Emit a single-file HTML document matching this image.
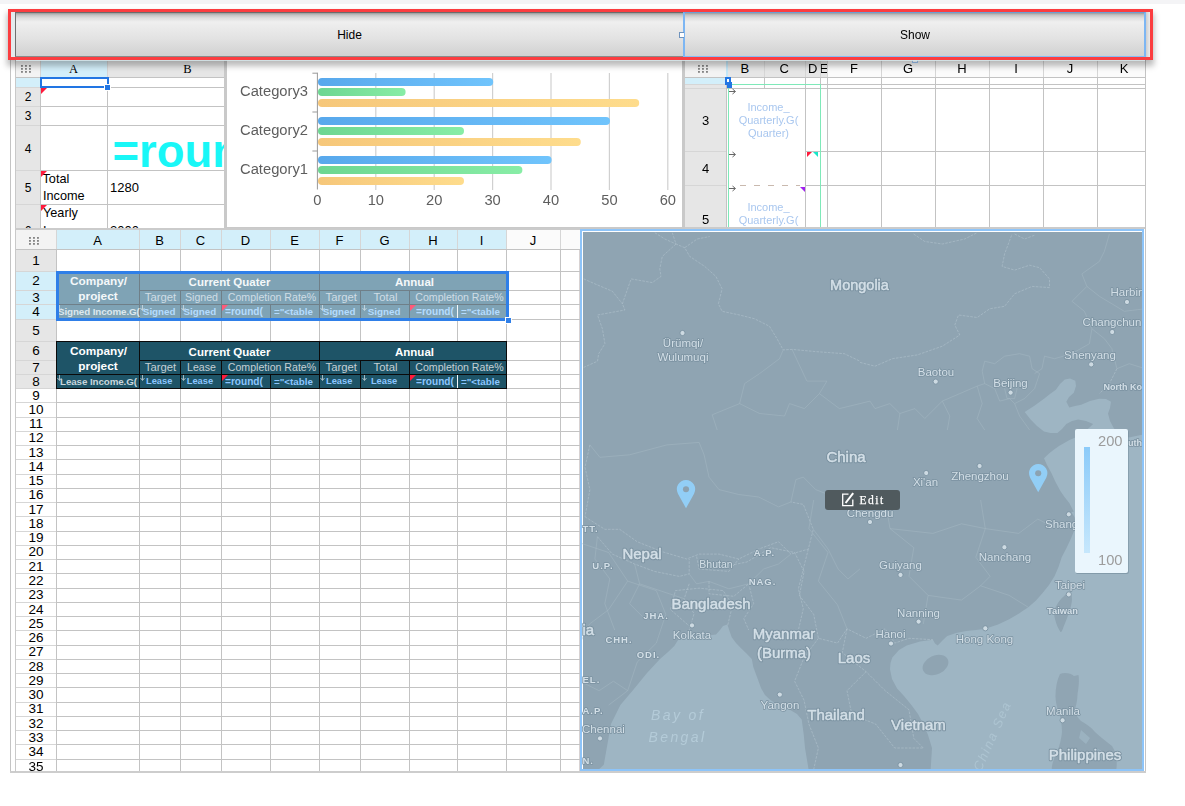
<!DOCTYPE html>
<html><head><meta charset="utf-8"><title>Report</title>
<style>
html,body{margin:0;padding:0;}
body{width:1185px;height:806px;position:relative;overflow:hidden;background:#fff;font-family:"Liberation Sans",sans-serif;}
#root div,#root svg{position:absolute;box-sizing:border-box;}
#root{position:absolute;left:0;top:0;width:1185px;height:806px;overflow:hidden;}
.t{white-space:nowrap;text-align:center;font-size:13px;color:#000;overflow:hidden;}
.clip{overflow:hidden;}
</style></head><body><div id="root">
<div style="left:0px;top:0px;width:1185px;height:4px;background:#f4f4f6"></div>
<div style="left:10px;top:10px;width:1px;height:762px;background:#c4c4c4"></div>
<div style="left:1145px;top:10px;width:1px;height:762px;background:#c4c4c4"></div>
<div style="left:10px;top:771px;width:1136px;height:2px;background:#cdcdcd"></div>
<div style="left:15px;top:60px;width:212px;height:169px;background:#fff"></div>
<div style="left:16px;top:60px;width:24px;height:17px;background:#f3f3f3"></div>
<div style="left:40px;top:60px;width:67px;height:17px;background:#d3effa"></div>
<div style="left:107px;top:60px;width:117px;height:17px;background:#e6e6e6"></div>
<div style="left:16px;top:77px;width:24px;height:10px;background:#d3effa"></div>
<div style="left:16px;top:87px;width:24px;height:141px;background:#e6e6e6"></div>
<svg style="left:21px;top:65px" width="11" height="9" viewBox="0 0 11 9"><rect x="0" y="0" width="1.9" height="1.8" fill="#858585"/><rect x="0" y="3" width="1.9" height="1.8" fill="#858585"/><rect x="0" y="6" width="1.9" height="1.8" fill="#858585"/><rect x="4" y="0" width="1.9" height="1.8" fill="#858585"/><rect x="4" y="3" width="1.9" height="1.8" fill="#858585"/><rect x="4" y="6" width="1.9" height="1.8" fill="#858585"/><rect x="8" y="0" width="1.9" height="1.8" fill="#858585"/><rect x="8" y="3" width="1.9" height="1.8" fill="#858585"/><rect x="8" y="6" width="1.9" height="1.8" fill="#858585"/></svg>
<div class="t" style="left:40px;top:61px;width:67px;height:17px;line-height:17px;font-family:'Liberation Serif',serif;font-size:12.5px">A</div>
<div class="t" style="left:147px;top:61px;width:81px;height:17px;line-height:17px;font-family:'Liberation Serif',serif;font-size:12.5px">B</div>
<div style="left:16px;top:77px;width:208px;height:1px;background:#c3c3c3"></div>
<div style="left:16px;top:87px;width:208px;height:1px;background:#c3c3c3"></div>
<div style="left:16px;top:87px;width:24px;height:1px;background:#d6d6d6"></div>
<div style="left:16px;top:106px;width:208px;height:1px;background:#c3c3c3"></div>
<div style="left:16px;top:106px;width:24px;height:1px;background:#d6d6d6"></div>
<div style="left:16px;top:125px;width:208px;height:1px;background:#c3c3c3"></div>
<div style="left:16px;top:125px;width:24px;height:1px;background:#d6d6d6"></div>
<div style="left:16px;top:170px;width:208px;height:1px;background:#c3c3c3"></div>
<div style="left:16px;top:170px;width:24px;height:1px;background:#d6d6d6"></div>
<div style="left:16px;top:204px;width:208px;height:1px;background:#c3c3c3"></div>
<div style="left:16px;top:204px;width:24px;height:1px;background:#d6d6d6"></div>
<div style="left:40px;top:60px;width:1px;height:168px;background:#c3c3c3"></div>
<div style="left:40px;top:60px;width:1px;height:17px;background:#d6d6d6"></div>
<div style="left:107px;top:60px;width:1px;height:168px;background:#c3c3c3"></div>
<div style="left:107px;top:60px;width:1px;height:17px;background:#d6d6d6"></div>
<div style="left:15px;top:60px;width:1px;height:169px;background:#c9c9c9"></div>
<div class="t" style="left:16px;top:87.5px;width:24px;height:19.5px;line-height:19.5px;font-size:12px">2</div>
<div class="t" style="left:16px;top:106.5px;width:24px;height:19.5px;line-height:19.5px;font-size:12px">3</div>
<div class="t" style="left:16px;top:126.5px;width:24px;height:44.5px;line-height:44.5px;font-size:12px">4</div>
<div class="t" style="left:16px;top:172px;width:24px;height:33px;line-height:33px;font-size:12px">5</div>
<div class="clip" style="left:16px;top:205px;width:24px;height:23px"><div class="t" style="left:0;top:19px;width:24px;height:14px;line-height:14px;font-size:12px">6</div></div>
<div class="clip" style="left:108px;top:126px;width:116px;height:44px"><div class="t" style="left:4.5px;top:3.5px;height:44px;line-height:44px;font-size:45.5px;font-weight:bold;color:#19f7f7;text-align:left;width:300px;overflow:visible">=round(</div></div>
<div class="t" style="left:42.5px;top:171px;width:62px;height:17px;line-height:17px;font-size:12.7px;text-align:left">Total</div>
<div class="t" style="left:43px;top:188px;width:62px;height:17px;line-height:17px;font-size:12.7px;text-align:left">Income</div>
<div class="t" style="left:110px;top:179px;width:60px;height:17px;line-height:17px;font-size:13px;text-align:left">1280</div>
<div class="t" style="left:43px;top:205px;width:62px;height:17px;line-height:17px;font-size:12.7px;text-align:left">Yearly</div>
<div class="clip" style="left:41px;top:218px;width:180px;height:10px"><div class="t" style="left:2px;top:5px;width:60px;height:17px;line-height:17px;font-size:12.7px;text-align:left">Income</div><div class="t" style="left:69px;top:4px;width:60px;height:17px;line-height:17px;font-size:13px;text-align:left">2000</div></div>
<svg style="left:41px;top:88px" width="6" height="6"><polygon points="0,0 6,0 0,6" fill="#ff1a3c"/></svg>
<svg style="left:41px;top:171px" width="6" height="6"><polygon points="0,0 6,0 0,6" fill="#ff1a3c"/></svg>
<svg style="left:41px;top:205px" width="6" height="6"><polygon points="0,0 6,0 0,6" fill="#ff1a3c"/></svg>
<div style="left:40px;top:77px;width:69px;height:11px;border:2px solid #2276e3;background:#fff"></div>
<div style="left:104px;top:84px;width:7px;height:7px;background:#2276e3;border:1px solid #fff"></div>
<div style="left:224px;top:60px;width:461px;height:169px;background:#fff;border:3px solid #c9c9c9;border-top:none;border-bottom-width:2px"></div>
<svg style="left:0;top:0;will-change:transform" width="1185" height="240" font-family="Liberation Sans, sans-serif"><line x1="375.8" y1="73" x2="375.8" y2="190" stroke="#d0d0d0" stroke-width="1.2"/><line x1="434.2" y1="73" x2="434.2" y2="190" stroke="#d0d0d0" stroke-width="1.2"/><line x1="492.6" y1="73" x2="492.6" y2="190" stroke="#d0d0d0" stroke-width="1.2"/><line x1="551.0" y1="73" x2="551.0" y2="190" stroke="#d0d0d0" stroke-width="1.2"/><line x1="609.4" y1="73" x2="609.4" y2="190" stroke="#d0d0d0" stroke-width="1.2"/><line x1="667.8" y1="73" x2="667.8" y2="190" stroke="#d0d0d0" stroke-width="1.2"/><line x1="317.4" y1="72.7" x2="317.4" y2="189.5" stroke="#999" stroke-width="1"/><line x1="312.4" y1="73.2" x2="317.4" y2="73.2" stroke="#999" stroke-width="1"/><line x1="312.4" y1="112" x2="317.4" y2="112" stroke="#999" stroke-width="1"/><line x1="312.4" y1="151" x2="317.4" y2="151" stroke="#999" stroke-width="1"/><defs>
<linearGradient id="gb" x1="0" x2="1" y1="0" y2="0"><stop offset="0" stop-color="#58a8ec"/><stop offset="1" stop-color="#70c4fc"/></linearGradient>
<linearGradient id="gg" x1="0" x2="1" y1="0" y2="0"><stop offset="0" stop-color="#6dd691"/><stop offset="1" stop-color="#88eda6"/></linearGradient>
<linearGradient id="go" x1="0" x2="1" y1="0" y2="0"><stop offset="0" stop-color="#f6c77a"/><stop offset="1" stop-color="#fedc8c"/></linearGradient>
</defs><rect x="318.0" y="78" width="175.2" height="8" rx="4" fill="url(#gb)"/><rect x="318.0" y="88" width="87.6" height="8" rx="4" fill="url(#gg)"/><rect x="318.0" y="99" width="321.2" height="8" rx="4" fill="url(#go)"/><rect x="318.0" y="117" width="292.0" height="8" rx="4" fill="url(#gb)"/><rect x="318.0" y="127" width="146.0" height="8" rx="4" fill="url(#gg)"/><rect x="318.0" y="138" width="262.8" height="8" rx="4" fill="url(#go)"/><rect x="318.0" y="156" width="233.6" height="8" rx="4" fill="url(#gb)"/><rect x="318.0" y="166" width="204.4" height="8" rx="4" fill="url(#gg)"/><rect x="318.0" y="177" width="146.0" height="8" rx="4" fill="url(#go)"/><text x="308" y="96.3" text-anchor="end" font-size="15.3" textLength="68" lengthAdjust="spacingAndGlyphs" fill="#5e5e5e">Category3</text><text x="308" y="135.3" text-anchor="end" font-size="15.3" textLength="68" lengthAdjust="spacingAndGlyphs" fill="#5e5e5e">Category2</text><text x="308" y="174.3" text-anchor="end" font-size="15.3" textLength="68" lengthAdjust="spacingAndGlyphs" fill="#5e5e5e">Category1</text><text x="317.4" y="205.3" text-anchor="middle" font-size="14.7" fill="#5e5e5e">0</text><text x="375.8" y="205.3" text-anchor="middle" font-size="14.7" fill="#5e5e5e">10</text><text x="434.2" y="205.3" text-anchor="middle" font-size="14.7" fill="#5e5e5e">20</text><text x="492.6" y="205.3" text-anchor="middle" font-size="14.7" fill="#5e5e5e">30</text><text x="551.0" y="205.3" text-anchor="middle" font-size="14.7" fill="#5e5e5e">40</text><text x="609.4" y="205.3" text-anchor="middle" font-size="14.7" fill="#5e5e5e">50</text><text x="667.8" y="205.3" text-anchor="middle" font-size="14.7" fill="#5e5e5e">60</text></svg>
<div style="left:685px;top:60px;width:460px;height:168px;background:#fff"></div>
<div style="left:685px;top:60px;width:41px;height:17px;background:#f3f3f3"></div>
<div style="left:726px;top:60px;width:101px;height:17px;background:#e6e6e6"></div>
<div style="left:827px;top:60px;width:318px;height:17px;background:#fbfbfb"></div>
<div style="left:685px;top:77px;width:41px;height:7px;background:#d3effa"></div>
<div style="left:685px;top:84px;width:41px;height:144px;background:#e6e6e6"></div>
<svg style="left:698px;top:65px" width="11" height="9" viewBox="0 0 11 9"><rect x="0" y="0" width="1.9" height="1.8" fill="#858585"/><rect x="0" y="3" width="1.9" height="1.8" fill="#858585"/><rect x="0" y="6" width="1.9" height="1.8" fill="#858585"/><rect x="4" y="0" width="1.9" height="1.8" fill="#858585"/><rect x="4" y="3" width="1.9" height="1.8" fill="#858585"/><rect x="4" y="6" width="1.9" height="1.8" fill="#858585"/><rect x="8" y="0" width="1.9" height="1.8" fill="#858585"/><rect x="8" y="3" width="1.9" height="1.8" fill="#858585"/><rect x="8" y="6" width="1.9" height="1.8" fill="#858585"/></svg>
<div class="t" style="left:720px;top:60px;width:49.5px;height:17px;line-height:17px;font-size:13px;overflow:visible">B</div>
<div class="t" style="left:757.5px;top:60px;width:53.5px;height:17px;line-height:17px;font-size:13px;overflow:visible">C</div>
<div class="t" style="left:799px;top:60px;width:27.5px;height:17px;line-height:17px;font-size:13px;overflow:visible">D</div>
<div class="t" style="left:814.5px;top:60px;width:18.5px;height:17px;line-height:17px;font-size:13px;overflow:visible">E</div>
<div class="t" style="left:821px;top:60px;width:66px;height:17px;line-height:17px;font-size:13px;overflow:visible">F</div>
<div class="t" style="left:875px;top:60px;width:66px;height:17px;line-height:17px;font-size:13px;overflow:visible">G</div>
<div class="t" style="left:929px;top:60px;width:66px;height:17px;line-height:17px;font-size:13px;overflow:visible">H</div>
<div class="t" style="left:983px;top:60px;width:66px;height:17px;line-height:17px;font-size:13px;overflow:visible">I</div>
<div class="t" style="left:1037px;top:60px;width:66px;height:17px;line-height:17px;font-size:13px;overflow:visible">J</div>
<div class="t" style="left:1091px;top:60px;width:66px;height:17px;line-height:17px;font-size:13px;overflow:visible">K</div>
<div style="left:685px;top:77px;width:460px;height:1px;background:#c3c3c3"></div>
<div style="left:685px;top:84px;width:460px;height:1px;background:#c3c3c3"></div>
<div style="left:685px;top:84px;width:41px;height:1px;background:#d6d6d6"></div>
<div style="left:685px;top:88px;width:460px;height:1px;background:#c3c3c3"></div>
<div style="left:685px;top:88px;width:41px;height:1px;background:#d6d6d6"></div>
<div style="left:685px;top:151px;width:460px;height:1px;background:#c3c3c3"></div>
<div style="left:685px;top:151px;width:41px;height:1px;background:#d6d6d6"></div>
<div style="left:685px;top:185px;width:460px;height:1px;background:#c3c3c3"></div>
<div style="left:685px;top:185px;width:41px;height:1px;background:#d6d6d6"></div>
<div style="left:726px;top:60px;width:1px;height:168px;background:#c3c3c3"></div>
<div style="left:726px;top:60px;width:1px;height:17px;background:#d6d6d6"></div>
<div style="left:764px;top:60px;width:1px;height:168px;background:#c3c3c3"></div>
<div style="left:764px;top:60px;width:1px;height:17px;background:#d6d6d6"></div>
<div style="left:805px;top:60px;width:1px;height:168px;background:#c3c3c3"></div>
<div style="left:805px;top:60px;width:1px;height:17px;background:#d6d6d6"></div>
<div style="left:820px;top:60px;width:1px;height:168px;background:#c3c3c3"></div>
<div style="left:820px;top:60px;width:1px;height:17px;background:#d6d6d6"></div>
<div style="left:827px;top:60px;width:1px;height:168px;background:#c3c3c3"></div>
<div style="left:827px;top:60px;width:1px;height:17px;background:#d6d6d6"></div>
<div style="left:881px;top:60px;width:1px;height:168px;background:#c3c3c3"></div>
<div style="left:881px;top:60px;width:1px;height:17px;background:#d6d6d6"></div>
<div style="left:935px;top:60px;width:1px;height:168px;background:#c3c3c3"></div>
<div style="left:935px;top:60px;width:1px;height:17px;background:#d6d6d6"></div>
<div style="left:989px;top:60px;width:1px;height:168px;background:#c3c3c3"></div>
<div style="left:989px;top:60px;width:1px;height:17px;background:#d6d6d6"></div>
<div style="left:1043px;top:60px;width:1px;height:168px;background:#c3c3c3"></div>
<div style="left:1043px;top:60px;width:1px;height:17px;background:#d6d6d6"></div>
<div style="left:1097px;top:60px;width:1px;height:168px;background:#c3c3c3"></div>
<div style="left:1097px;top:60px;width:1px;height:17px;background:#d6d6d6"></div>
<div style="left:727px;top:89px;width:78px;height:139px;background:#fff"></div>
<div style="left:740px;top:185px;width:60px;height:1px;background:repeating-linear-gradient(90deg,#c9b9ae 0 6px,transparent 6px 14px)"></div>
<div class="t" style="left:685px;top:89px;width:41px;height:63px;line-height:63px;font-size:13px">3</div>
<div class="t" style="left:685px;top:152px;width:41px;height:34px;line-height:34px;font-size:13px">4</div>
<div class="t" style="left:685px;top:212px;width:41px;height:16px;line-height:16px;font-size:13px">5</div>
<div class="t" style="left:730px;top:101px;width:77px;height:13px;line-height:13px;font-size:11px;color:#a9c7ef">Income_</div>
<div class="t" style="left:730px;top:114px;width:77px;height:13px;line-height:13px;font-size:11px;color:#a9c7ef">Quarterly.G(</div>
<div class="t" style="left:730px;top:127px;width:77px;height:13px;line-height:13px;font-size:11px;color:#a9c7ef">Quarter)</div>
<div class="t" style="left:730px;top:201px;width:77px;height:13px;line-height:13px;font-size:11px;color:#a9c7ef">Income_</div>
<div class="t" style="left:730px;top:214px;width:77px;height:13px;line-height:13px;font-size:11px;color:#a9c7ef">Quarterly.G(</div>
<div style="left:728px;top:84px;width:93px;height:150px;border:1px solid #7fe9b9;border-bottom:none"></div>
<svg style="left:729px;top:88px" width="8" height="7"><path d="M0 3.5H6M3.5 1L6.5 3.5L3.5 6" stroke="#666" fill="none" stroke-width="1"/></svg>
<svg style="left:729px;top:151px" width="8" height="7"><path d="M0 3.5H6M3.5 1L6.5 3.5L3.5 6" stroke="#666" fill="none" stroke-width="1"/></svg>
<svg style="left:729px;top:185px" width="8" height="7"><path d="M0 3.5H6M3.5 1L6.5 3.5L3.5 6" stroke="#666" fill="none" stroke-width="1"/></svg>
<svg style="left:807px;top:152px" width="5" height="5"><polygon points="0,0 5,0 0,5" fill="#ff1a3c"/></svg>
<svg style="left:813px;top:152px" width="5" height="5"><polygon points="0,0 5,0 5,5" fill="#19e6c8"/></svg>
<svg style="left:800px;top:187px" width="5" height="5"><polygon points="0,0 5,0 5,5" fill="#a020f0"/></svg>
<div style="left:725px;top:77px;width:6px;height:8px;border:2px solid #2276e3;background:#fff"></div>
<div style="left:727px;top:82px;width:5px;height:6px;background:#2276e3"></div>
<div style="left:685px;top:227px;width:460px;height:2px;background:#cbcbcb"></div>
<div style="left:725.5px;top:60px;width:2.5px;height:17px;background:#c3e7f8"></div>
<div style="left:15px;top:229px;width:565px;height:542px;background:#fff"></div>
<div style="left:15px;top:228px;width:565px;height:2px;background:#cbcbcb"></div>
<div style="left:579px;top:230px;width:1px;height:541px;background:#d8d2d2"></div>
<div style="left:15px;top:229px;width:1px;height:543px;background:#c9c9c9"></div>
<div style="left:16px;top:230px;width:40px;height:19px;background:#f3f3f3"></div>
<div style="left:56px;top:230px;width:451px;height:19px;background:#d3effa"></div>
<div style="left:507px;top:230px;width:73px;height:19px;background:#fbfbfb"></div>
<svg style="left:29px;top:237px" width="11" height="9" viewBox="0 0 11 9"><rect x="0" y="0" width="1.9" height="1.8" fill="#858585"/><rect x="0" y="3" width="1.9" height="1.8" fill="#858585"/><rect x="0" y="6" width="1.9" height="1.8" fill="#858585"/><rect x="4" y="0" width="1.9" height="1.8" fill="#858585"/><rect x="4" y="3" width="1.9" height="1.8" fill="#858585"/><rect x="4" y="6" width="1.9" height="1.8" fill="#858585"/><rect x="8" y="0" width="1.9" height="1.8" fill="#858585"/><rect x="8" y="3" width="1.9" height="1.8" fill="#858585"/><rect x="8" y="6" width="1.9" height="1.8" fill="#858585"/></svg>
<div class="t" style="left:56px;top:231px;width:83px;height:20px;line-height:20px;font-size:13px">A</div>
<div class="t" style="left:139px;top:231px;width:41px;height:20px;line-height:20px;font-size:13px">B</div>
<div class="t" style="left:180px;top:231px;width:41px;height:20px;line-height:20px;font-size:13px">C</div>
<div class="t" style="left:221px;top:231px;width:49px;height:20px;line-height:20px;font-size:13px">D</div>
<div class="t" style="left:270px;top:231px;width:49px;height:20px;line-height:20px;font-size:13px">E</div>
<div class="t" style="left:319px;top:231px;width:41px;height:20px;line-height:20px;font-size:13px">F</div>
<div class="t" style="left:360px;top:231px;width:49px;height:20px;line-height:20px;font-size:13px">G</div>
<div class="t" style="left:409px;top:231px;width:48px;height:20px;line-height:20px;font-size:13px">H</div>
<div class="t" style="left:457px;top:231px;width:49px;height:20px;line-height:20px;font-size:13px">I</div>
<div class="t" style="left:506px;top:231px;width:54px;height:20px;line-height:20px;font-size:13px">J</div>
<div style="left:16px;top:249px;width:40px;height:22px;background:#e6e6e6"></div>
<div style="left:16px;top:271px;width:40px;height:48px;background:#d3effa"></div>
<div style="left:16px;top:319px;width:40px;height:70px;background:#e6e6e6"></div>
<div style="left:16px;top:249px;width:564px;height:1px;background:#c3c3c3"></div>
<div style="left:16px;top:271px;width:564px;height:1px;background:#c3c3c3"></div>
<div style="left:16px;top:271px;width:40px;height:1px;background:#d6d6d6"></div>
<div style="left:16px;top:290px;width:564px;height:1px;background:#c3c3c3"></div>
<div style="left:16px;top:290px;width:40px;height:1px;background:#d6d6d6"></div>
<div style="left:16px;top:304px;width:564px;height:1px;background:#c3c3c3"></div>
<div style="left:16px;top:304px;width:40px;height:1px;background:#d6d6d6"></div>
<div style="left:16px;top:319px;width:564px;height:1px;background:#c3c3c3"></div>
<div style="left:16px;top:319px;width:40px;height:1px;background:#d6d6d6"></div>
<div style="left:16px;top:341px;width:564px;height:1px;background:#c3c3c3"></div>
<div style="left:16px;top:341px;width:40px;height:1px;background:#d6d6d6"></div>
<div style="left:16px;top:360px;width:564px;height:1px;background:#c3c3c3"></div>
<div style="left:16px;top:360px;width:40px;height:1px;background:#d6d6d6"></div>
<div style="left:16px;top:374px;width:564px;height:1px;background:#c3c3c3"></div>
<div style="left:16px;top:374px;width:40px;height:1px;background:#d6d6d6"></div>
<div style="left:16px;top:388px;width:564px;height:1px;background:#c3c3c3"></div>
<div style="left:16px;top:388px;width:40px;height:1px;background:#d6d6d6"></div>
<div style="left:16px;top:402px;width:564px;height:1px;background:#c3c3c3"></div>
<div style="left:16px;top:402px;width:40px;height:1px;background:#d6d6d6"></div>
<div style="left:16px;top:417px;width:564px;height:1px;background:#c3c3c3"></div>
<div style="left:16px;top:417px;width:40px;height:1px;background:#d6d6d6"></div>
<div style="left:16px;top:431px;width:564px;height:1px;background:#c3c3c3"></div>
<div style="left:16px;top:431px;width:40px;height:1px;background:#d6d6d6"></div>
<div style="left:16px;top:445px;width:564px;height:1px;background:#c3c3c3"></div>
<div style="left:16px;top:445px;width:40px;height:1px;background:#d6d6d6"></div>
<div style="left:16px;top:459px;width:564px;height:1px;background:#c3c3c3"></div>
<div style="left:16px;top:459px;width:40px;height:1px;background:#d6d6d6"></div>
<div style="left:16px;top:474px;width:564px;height:1px;background:#c3c3c3"></div>
<div style="left:16px;top:474px;width:40px;height:1px;background:#d6d6d6"></div>
<div style="left:16px;top:488px;width:564px;height:1px;background:#c3c3c3"></div>
<div style="left:16px;top:488px;width:40px;height:1px;background:#d6d6d6"></div>
<div style="left:16px;top:502px;width:564px;height:1px;background:#c3c3c3"></div>
<div style="left:16px;top:502px;width:40px;height:1px;background:#d6d6d6"></div>
<div style="left:16px;top:516px;width:564px;height:1px;background:#c3c3c3"></div>
<div style="left:16px;top:516px;width:40px;height:1px;background:#d6d6d6"></div>
<div style="left:16px;top:531px;width:564px;height:1px;background:#c3c3c3"></div>
<div style="left:16px;top:531px;width:40px;height:1px;background:#d6d6d6"></div>
<div style="left:16px;top:545px;width:564px;height:1px;background:#c3c3c3"></div>
<div style="left:16px;top:545px;width:40px;height:1px;background:#d6d6d6"></div>
<div style="left:16px;top:559px;width:564px;height:1px;background:#c3c3c3"></div>
<div style="left:16px;top:559px;width:40px;height:1px;background:#d6d6d6"></div>
<div style="left:16px;top:573px;width:564px;height:1px;background:#c3c3c3"></div>
<div style="left:16px;top:573px;width:40px;height:1px;background:#d6d6d6"></div>
<div style="left:16px;top:588px;width:564px;height:1px;background:#c3c3c3"></div>
<div style="left:16px;top:588px;width:40px;height:1px;background:#d6d6d6"></div>
<div style="left:16px;top:602px;width:564px;height:1px;background:#c3c3c3"></div>
<div style="left:16px;top:602px;width:40px;height:1px;background:#d6d6d6"></div>
<div style="left:16px;top:616px;width:564px;height:1px;background:#c3c3c3"></div>
<div style="left:16px;top:616px;width:40px;height:1px;background:#d6d6d6"></div>
<div style="left:16px;top:630px;width:564px;height:1px;background:#c3c3c3"></div>
<div style="left:16px;top:630px;width:40px;height:1px;background:#d6d6d6"></div>
<div style="left:16px;top:645px;width:564px;height:1px;background:#c3c3c3"></div>
<div style="left:16px;top:645px;width:40px;height:1px;background:#d6d6d6"></div>
<div style="left:16px;top:659px;width:564px;height:1px;background:#c3c3c3"></div>
<div style="left:16px;top:659px;width:40px;height:1px;background:#d6d6d6"></div>
<div style="left:16px;top:673px;width:564px;height:1px;background:#c3c3c3"></div>
<div style="left:16px;top:673px;width:40px;height:1px;background:#d6d6d6"></div>
<div style="left:16px;top:687px;width:564px;height:1px;background:#c3c3c3"></div>
<div style="left:16px;top:687px;width:40px;height:1px;background:#d6d6d6"></div>
<div style="left:16px;top:702px;width:564px;height:1px;background:#c3c3c3"></div>
<div style="left:16px;top:702px;width:40px;height:1px;background:#d6d6d6"></div>
<div style="left:16px;top:716px;width:564px;height:1px;background:#c3c3c3"></div>
<div style="left:16px;top:716px;width:40px;height:1px;background:#d6d6d6"></div>
<div style="left:16px;top:730px;width:564px;height:1px;background:#c3c3c3"></div>
<div style="left:16px;top:730px;width:40px;height:1px;background:#d6d6d6"></div>
<div style="left:16px;top:744px;width:564px;height:1px;background:#c3c3c3"></div>
<div style="left:16px;top:744px;width:40px;height:1px;background:#d6d6d6"></div>
<div style="left:16px;top:759px;width:564px;height:1px;background:#c3c3c3"></div>
<div style="left:16px;top:759px;width:40px;height:1px;background:#d6d6d6"></div>
<div style="left:56px;top:230px;width:1px;height:541px;background:#c3c3c3"></div>
<div style="left:56px;top:230px;width:1px;height:19px;background:#d6d6d6"></div>
<div style="left:139px;top:230px;width:1px;height:541px;background:#c3c3c3"></div>
<div style="left:139px;top:230px;width:1px;height:19px;background:#d6d6d6"></div>
<div style="left:180px;top:230px;width:1px;height:541px;background:#c3c3c3"></div>
<div style="left:180px;top:230px;width:1px;height:19px;background:#d6d6d6"></div>
<div style="left:221px;top:230px;width:1px;height:541px;background:#c3c3c3"></div>
<div style="left:221px;top:230px;width:1px;height:19px;background:#d6d6d6"></div>
<div style="left:270px;top:230px;width:1px;height:541px;background:#c3c3c3"></div>
<div style="left:270px;top:230px;width:1px;height:19px;background:#d6d6d6"></div>
<div style="left:319px;top:230px;width:1px;height:541px;background:#c3c3c3"></div>
<div style="left:319px;top:230px;width:1px;height:19px;background:#d6d6d6"></div>
<div style="left:360px;top:230px;width:1px;height:541px;background:#c3c3c3"></div>
<div style="left:360px;top:230px;width:1px;height:19px;background:#d6d6d6"></div>
<div style="left:409px;top:230px;width:1px;height:541px;background:#c3c3c3"></div>
<div style="left:409px;top:230px;width:1px;height:19px;background:#d6d6d6"></div>
<div style="left:457px;top:230px;width:1px;height:541px;background:#c3c3c3"></div>
<div style="left:457px;top:230px;width:1px;height:19px;background:#d6d6d6"></div>
<div style="left:506px;top:230px;width:1px;height:541px;background:#c3c3c3"></div>
<div style="left:506px;top:230px;width:1px;height:19px;background:#d6d6d6"></div>
<div style="left:560px;top:230px;width:1px;height:541px;background:#c3c3c3"></div>
<div style="left:560px;top:230px;width:1px;height:19px;background:#d6d6d6"></div>
<div class="t" style="left:16px;top:251.5px;width:40px;height:17px;line-height:17px;font-size:13.5px">1</div>
<div class="t" style="left:16px;top:272.0px;width:40px;height:17px;line-height:17px;font-size:13.5px">2</div>
<div class="t" style="left:16px;top:288.5px;width:40px;height:17px;line-height:17px;font-size:13.5px">3</div>
<div class="t" style="left:16px;top:303.0px;width:40px;height:17px;line-height:17px;font-size:13.5px">4</div>
<div class="t" style="left:16px;top:321.5px;width:40px;height:17px;line-height:17px;font-size:13.5px">5</div>
<div class="t" style="left:16px;top:342.0px;width:40px;height:17px;line-height:17px;font-size:13.5px">6</div>
<div class="t" style="left:16px;top:358.5px;width:40px;height:17px;line-height:17px;font-size:13.5px">7</div>
<div class="t" style="left:16px;top:372.5px;width:40px;height:17px;line-height:17px;font-size:13.5px">8</div>
<div class="t" style="left:16px;top:386.6px;width:40px;height:17px;line-height:17px;font-size:13.5px">9</div>
<div class="t" style="left:16px;top:400.9px;width:40px;height:17px;line-height:17px;font-size:13.5px">10</div>
<div class="t" style="left:16px;top:415.1px;width:40px;height:17px;line-height:17px;font-size:13.5px">11</div>
<div class="t" style="left:16px;top:429.4px;width:40px;height:17px;line-height:17px;font-size:13.5px">12</div>
<div class="t" style="left:16px;top:443.6px;width:40px;height:17px;line-height:17px;font-size:13.5px">13</div>
<div class="t" style="left:16px;top:457.9px;width:40px;height:17px;line-height:17px;font-size:13.5px">14</div>
<div class="t" style="left:16px;top:472.2px;width:40px;height:17px;line-height:17px;font-size:13.5px">15</div>
<div class="t" style="left:16px;top:486.4px;width:40px;height:17px;line-height:17px;font-size:13.5px">16</div>
<div class="t" style="left:16px;top:500.7px;width:40px;height:17px;line-height:17px;font-size:13.5px">17</div>
<div class="t" style="left:16px;top:514.9px;width:40px;height:17px;line-height:17px;font-size:13.5px">18</div>
<div class="t" style="left:16px;top:529.2px;width:40px;height:17px;line-height:17px;font-size:13.5px">19</div>
<div class="t" style="left:16px;top:543.4px;width:40px;height:17px;line-height:17px;font-size:13.5px">20</div>
<div class="t" style="left:16px;top:557.7px;width:40px;height:17px;line-height:17px;font-size:13.5px">21</div>
<div class="t" style="left:16px;top:571.9px;width:40px;height:17px;line-height:17px;font-size:13.5px">22</div>
<div class="t" style="left:16px;top:586.2px;width:40px;height:17px;line-height:17px;font-size:13.5px">23</div>
<div class="t" style="left:16px;top:600.5px;width:40px;height:17px;line-height:17px;font-size:13.5px">24</div>
<div class="t" style="left:16px;top:614.7px;width:40px;height:17px;line-height:17px;font-size:13.5px">25</div>
<div class="t" style="left:16px;top:629.0px;width:40px;height:17px;line-height:17px;font-size:13.5px">26</div>
<div class="t" style="left:16px;top:643.2px;width:40px;height:17px;line-height:17px;font-size:13.5px">27</div>
<div class="t" style="left:16px;top:657.5px;width:40px;height:17px;line-height:17px;font-size:13.5px">28</div>
<div class="t" style="left:16px;top:671.7px;width:40px;height:17px;line-height:17px;font-size:13.5px">29</div>
<div class="t" style="left:16px;top:686.0px;width:40px;height:17px;line-height:17px;font-size:13.5px">30</div>
<div class="t" style="left:16px;top:700.2px;width:40px;height:17px;line-height:17px;font-size:13.5px">31</div>
<div class="t" style="left:16px;top:714.5px;width:40px;height:17px;line-height:17px;font-size:13.5px">32</div>
<div class="t" style="left:16px;top:728.7px;width:40px;height:17px;line-height:17px;font-size:13.5px">33</div>
<div class="t" style="left:16px;top:743.0px;width:40px;height:17px;line-height:17px;font-size:13.5px">34</div>
<div class="t" style="left:16px;top:758.0px;width:40px;height:17px;line-height:17px;font-size:13.5px">35</div>
<div style="left:56px;top:271px;width:451px;height:49px;background:#7fa3b5"></div>
<div style="left:56px;top:271px;width:451px;height:1px;background:#6f7f88"></div>
<div style="left:56px;top:319px;width:451px;height:1px;background:#6f7f88"></div>
<div style="left:139px;top:290px;width:368px;height:1px;background:#6f7f88"></div>
<div style="left:56px;top:304px;width:451px;height:1px;background:#6f7f88"></div>
<div style="left:56px;top:271px;width:1px;height:48px;background:#6f7f88"></div>
<div style="left:506px;top:271px;width:1px;height:48px;background:#6f7f88"></div>
<div style="left:139px;top:271px;width:1px;height:48px;background:#6f7f88"></div>
<div style="left:319px;top:271px;width:1px;height:48px;background:#6f7f88"></div>
<div style="left:180px;top:290px;width:1px;height:29px;background:#6f7f88"></div>
<div style="left:221px;top:290px;width:1px;height:29px;background:#6f7f88"></div>
<div style="left:360px;top:290px;width:1px;height:29px;background:#6f7f88"></div>
<div style="left:409px;top:290px;width:1px;height:29px;background:#6f7f88"></div>
<div style="left:270px;top:304px;width:1px;height:15px;background:#6f7f88"></div>
<div style="left:457px;top:304px;width:1px;height:15px;background:#6f7f88"></div>
<div class="t" style="left:56.5px;top:273.7px;width:84px;height:15px;line-height:15px;font-size:11.8px;font-weight:bold;color:#f4f8fa">Company/</div>
<div class="t" style="left:56px;top:288.5px;width:84px;height:15px;line-height:15px;font-size:11.8px;font-weight:bold;color:#f4f8fa">project</div>
<div class="t" style="left:139px;top:271.7px;width:181px;height:20px;line-height:20px;font-size:11.5px;font-weight:bold;color:#f4f8fa">Current Quater</div>
<div class="t" style="left:320.5px;top:271.7px;width:188px;height:20px;line-height:20px;font-size:11.5px;font-weight:bold;color:#f4f8fa">Annual</div>
<div class="t" style="left:139.5px;top:290px;width:42px;height:15px;line-height:15px;font-size:11.3px;color:#cfdde5;">Target</div>
<div class="t" style="left:180.5px;top:290px;width:42px;height:15px;line-height:15px;font-size:10.6px;color:#cfdde5;">Signed</div>
<div class="t" style="left:222.5px;top:290px;width:99px;height:15px;line-height:15px;font-size:10.6px;color:#cfdde5;">Completion Rate%</div>
<div class="t" style="left:319.7px;top:290px;width:43px;height:15px;line-height:15px;font-size:11.3px;color:#cfdde5;">Target</div>
<div class="t" style="left:361px;top:290px;width:49px;height:15px;line-height:15px;font-size:11.3px;color:#cfdde5;">Total</div>
<div class="t" style="left:410.5px;top:290px;width:98px;height:15px;line-height:15px;font-size:10.6px;color:#cfdde5;">Completion Rate%</div>
<div class="t" style="left:57px;top:304px;width:83px;height:16px;line-height:16px;font-size:9.8px;font-weight:bold;color:#dce8ee;text-align:left;letter-spacing:-0.1px;padding-left:1px">Signed Income.G(</div>
<div class="t" style="left:139.2px;top:304px;width:40px;height:16px;line-height:16px;font-size:9.8px;font-weight:bold;color:#b5dcff">Signed</div>
<div class="t" style="left:179.9px;top:304px;width:40px;height:16px;line-height:16px;font-size:9.8px;font-weight:bold;color:#b5dcff">Signed</div>
<div class="t" style="left:319.2px;top:304px;width:40px;height:16px;line-height:16px;font-size:9.8px;font-weight:bold;color:#b5dcff">Signed</div>
<div class="t" style="left:364.1px;top:304px;width:40px;height:16px;line-height:16px;font-size:9.8px;font-weight:bold;color:#b5dcff">Signed</div>
<div class="t" style="left:225px;top:304px;width:46px;height:16px;line-height:16px;font-size:10.1px;font-weight:bold;color:#b5dcff;text-align:left">=round(</div>
<div class="t" style="left:416px;top:304px;width:46px;height:16px;line-height:16px;font-size:10.1px;font-weight:bold;color:#b5dcff;text-align:left">=round(</div>
<div class="t" style="left:274px;top:304px;width:46px;height:16px;line-height:16px;font-size:9.8px;font-weight:bold;color:#b5dcff;text-align:left">=&quot;&lt;table</div>
<div class="t" style="left:461px;top:304px;width:46px;height:16px;line-height:16px;font-size:9.8px;font-weight:bold;color:#b5dcff;text-align:left">=&quot;&lt;table</div>
<svg style="left:57px;top:305px" width="5" height="6"><path d="M2.5 0V5M0.5 3L2.5 5.5L4.5 3" stroke="#cfdde5" fill="none" stroke-width="0.8"/></svg>
<svg style="left:140px;top:305px" width="5" height="6"><path d="M2.5 0V5M0.5 3L2.5 5.5L4.5 3" stroke="#cfdde5" fill="none" stroke-width="0.8"/></svg>
<svg style="left:181px;top:305px" width="5" height="6"><path d="M2.5 0V5M0.5 3L2.5 5.5L4.5 3" stroke="#cfdde5" fill="none" stroke-width="0.8"/></svg>
<svg style="left:320px;top:305px" width="5" height="6"><path d="M2.5 0V5M0.5 3L2.5 5.5L4.5 3" stroke="#cfdde5" fill="none" stroke-width="0.8"/></svg>
<svg style="left:362px;top:305px" width="5" height="6"><path d="M2.5 0V5M0.5 3L2.5 5.5L4.5 3" stroke="#cfdde5" fill="none" stroke-width="0.8"/></svg>
<div style="left:457px;top:305px;width:1px;height:14px;background:#f4f8fa"></div>
<svg style="left:222px;top:305px" width="6" height="6"><polygon points="0,0 6,0 0,6" fill="#ff5a7a"/></svg>
<svg style="left:410px;top:305px" width="6" height="6"><polygon points="0,0 6,0 0,6" fill="#ff5a7a"/></svg>
<div style="left:56px;top:341px;width:451px;height:48px;background:#1e5467"></div>
<div style="left:56px;top:341px;width:451px;height:1px;background:#0a0a0a"></div>
<div style="left:56px;top:388px;width:451px;height:1px;background:#0a0a0a"></div>
<div style="left:139px;top:360px;width:368px;height:1px;background:#0a0a0a"></div>
<div style="left:56px;top:374px;width:451px;height:1px;background:#0a0a0a"></div>
<div style="left:56px;top:341px;width:1px;height:47px;background:#0a0a0a"></div>
<div style="left:506px;top:341px;width:1px;height:47px;background:#0a0a0a"></div>
<div style="left:139px;top:341px;width:1px;height:47px;background:#0a0a0a"></div>
<div style="left:319px;top:341px;width:1px;height:47px;background:#0a0a0a"></div>
<div style="left:180px;top:360px;width:1px;height:28px;background:#0a0a0a"></div>
<div style="left:221px;top:360px;width:1px;height:28px;background:#0a0a0a"></div>
<div style="left:360px;top:360px;width:1px;height:28px;background:#0a0a0a"></div>
<div style="left:409px;top:360px;width:1px;height:28px;background:#0a0a0a"></div>
<div style="left:270px;top:374px;width:1px;height:14px;background:#0a0a0a"></div>
<div style="left:457px;top:374px;width:1px;height:14px;background:#0a0a0a"></div>
<div class="t" style="left:56.5px;top:343.7px;width:84px;height:15px;line-height:15px;font-size:11.8px;font-weight:bold;color:#ffffff">Company/</div>
<div class="t" style="left:56px;top:358.5px;width:84px;height:15px;line-height:15px;font-size:11.8px;font-weight:bold;color:#ffffff">project</div>
<div class="t" style="left:139px;top:341.7px;width:181px;height:20px;line-height:20px;font-size:11.5px;font-weight:bold;color:#ffffff">Current Quater</div>
<div class="t" style="left:320.5px;top:341.7px;width:188px;height:20px;line-height:20px;font-size:11.5px;font-weight:bold;color:#ffffff">Annual</div>
<div class="t" style="left:139.5px;top:360px;width:42px;height:15px;line-height:15px;font-size:11.3px;color:#c5d0d5;">Target</div>
<div class="t" style="left:180.5px;top:360px;width:42px;height:15px;line-height:15px;font-size:10.6px;color:#c5d0d5;">Lease</div>
<div class="t" style="left:222.5px;top:360px;width:99px;height:15px;line-height:15px;font-size:10.6px;color:#c5d0d5;">Completion Rate%</div>
<div class="t" style="left:319.7px;top:360px;width:43px;height:15px;line-height:15px;font-size:11.3px;color:#c5d0d5;">Target</div>
<div class="t" style="left:361px;top:360px;width:49px;height:15px;line-height:15px;font-size:11.3px;color:#c5d0d5;">Total</div>
<div class="t" style="left:410.5px;top:360px;width:98px;height:15px;line-height:15px;font-size:10.6px;color:#c5d0d5;">Completion Rate%</div>
<div class="t" style="left:57px;top:374px;width:83px;height:15px;line-height:15px;font-size:9.8px;font-weight:bold;color:#c8d6dc;text-align:left;letter-spacing:-0.1px;padding-left:3px">Lease Income.G(</div>
<div class="t" style="left:139.2px;top:374px;width:40px;height:15px;line-height:15px;font-size:9.3px;font-weight:bold;color:#8cc6ff">Lease</div>
<div class="t" style="left:179.9px;top:374px;width:40px;height:15px;line-height:15px;font-size:9.3px;font-weight:bold;color:#8cc6ff">Lease</div>
<div class="t" style="left:319.2px;top:374px;width:40px;height:15px;line-height:15px;font-size:9.3px;font-weight:bold;color:#8cc6ff">Lease</div>
<div class="t" style="left:364.1px;top:374px;width:40px;height:15px;line-height:15px;font-size:9.3px;font-weight:bold;color:#8cc6ff">Lease</div>
<div class="t" style="left:225px;top:374px;width:46px;height:15px;line-height:15px;font-size:10.1px;font-weight:bold;color:#8cc6ff;text-align:left">=round(</div>
<div class="t" style="left:416px;top:374px;width:46px;height:15px;line-height:15px;font-size:10.1px;font-weight:bold;color:#8cc6ff;text-align:left">=round(</div>
<div class="t" style="left:274px;top:374px;width:46px;height:15px;line-height:15px;font-size:9.8px;font-weight:bold;color:#8cc6ff;text-align:left">=&quot;&lt;table</div>
<div class="t" style="left:461px;top:374px;width:46px;height:15px;line-height:15px;font-size:9.8px;font-weight:bold;color:#8cc6ff;text-align:left">=&quot;&lt;table</div>
<svg style="left:57px;top:375px" width="5" height="6"><path d="M2.5 0V5M0.5 3L2.5 5.5L4.5 3" stroke="#c5d0d5" fill="none" stroke-width="0.8"/></svg>
<svg style="left:140px;top:375px" width="5" height="6"><path d="M2.5 0V5M0.5 3L2.5 5.5L4.5 3" stroke="#c5d0d5" fill="none" stroke-width="0.8"/></svg>
<svg style="left:181px;top:375px" width="5" height="6"><path d="M2.5 0V5M0.5 3L2.5 5.5L4.5 3" stroke="#c5d0d5" fill="none" stroke-width="0.8"/></svg>
<svg style="left:320px;top:375px" width="5" height="6"><path d="M2.5 0V5M0.5 3L2.5 5.5L4.5 3" stroke="#c5d0d5" fill="none" stroke-width="0.8"/></svg>
<svg style="left:362px;top:375px" width="5" height="6"><path d="M2.5 0V5M0.5 3L2.5 5.5L4.5 3" stroke="#c5d0d5" fill="none" stroke-width="0.8"/></svg>
<div style="left:457px;top:375px;width:1px;height:13px;background:#f4f8fa"></div>
<svg style="left:222px;top:375px" width="6" height="6"><polygon points="0,0 6,0 0,6" fill="#ff1a3c"/></svg>
<svg style="left:410px;top:375px" width="6" height="6"><polygon points="0,0 6,0 0,6" fill="#ff1a3c"/></svg>
<div style="left:56px;top:271px;width:453px;height:50px;border:3px solid #2f7fe8"></div>
<div style="left:505px;top:317px;width:7px;height:7px;background:#2f7fe8;border:1px solid #fff"></div>
<div style="left:8px;top:9px;width:1145px;height:51px;border:3px solid #fb3d40;background:#e4ebed;box-shadow:0 5px 6px 1px rgba(0,0,0,.27)"></div>
<div style="left:1146px;top:12px;width:4px;height:45px;background:linear-gradient(90deg,#cfcfcf,#ececec)"></div>
<div style="left:15px;top:12px;width:669px;height:45px;background:linear-gradient(180deg,#9a9a9a 0px,#c4c4c4 2px,#dedede 5px,#efefef 9px,#ebebeb 14px,#e2e2e2 26px,#d6d6d6 38px,#d0d0d0 44px);border:1px solid #707070;border-top-color:#6b6b6b;border-bottom-color:#8a8a8a"></div>
<div style="left:683px;top:12px;width:463px;height:45px;background:linear-gradient(180deg,#9a9a9a 0px,#c4c4c4 2px,#dedede 5px,#efefef 9px,#ebebeb 14px,#e2e2e2 26px,#d6d6d6 38px,#d0d0d0 44px);border:2px solid #7db6f3;border-top:1.5px solid #6d9fd3;border-bottom:1.5px solid #85bdf5"></div>
<div class="t" style="left:15px;top:26.8px;width:669px;height:17px;line-height:17px;font-size:12px">Hide</div>
<div class="t" style="left:684px;top:26.8px;width:462px;height:17px;line-height:17px;font-size:12px">Show</div>
<div style="left:912px;top:60px;width:6px;height:3px;background:#c8ccd0;border:1px solid #7d9cc0;border-top:none"></div>
<div style="left:679px;top:32px;width:5px;height:6px;background:#fff;border:1px solid #6f93bd;border-right:none"></div>
<div style="left:16px;top:60px;width:1129px;height:1px;background:rgba(214,230,234,0.85)"></div>
<svg style="left:0;top:0;will-change:transform" width="1185" height="806" font-family="Liberation Sans, sans-serif"><defs><clipPath id="mc"><rect x="582" y="232" width="560" height="537"/></clipPath><linearGradient id="lg" x1="0" x2="0" y1="0" y2="1"><stop offset="0" stop-color="#8ccbf9"/><stop offset="1" stop-color="#c6e7fc"/></linearGradient></defs><rect x="580" y="229" width="564" height="542" fill="#8dc4f9"/><rect x="582" y="231" width="560" height="538" fill="#ffffff"/><rect x="583" y="232" width="559" height="537" fill="#8fa4b2"/><g clip-path="url(#mc)"><polygon points="596,772 603.8,764.7 611,724 620.4,705 632.5,690.7 647,673 660,659 668,652 674.3,646 678.7,639 690,637.5 703,636 716,634.5 720,630 723,626 727.4,624.4 729.5,631 731.7,637.3 736,643 740.3,647.4 746,653 751.8,658.9 753.3,667 757,677 761.2,688.4 765,695 770.7,700.3 780,706 789.8,709.8 797,714 801.7,719.4 803.8,735 805,748 807,760 809,772" fill="#9eb5c3"/><polygon points="1024.7,412.1 1034,406 1044,398.7 1050,394 1055.9,389.8 1060,384 1064.8,379.4 1070,378.5 1075.3,380.8 1076,386 1073.8,392.7 1069,397 1066.3,401.7 1069.3,407.6 1075,406 1081.2,404.7 1090,401 1099.1,398.7 1106,399 1111,401.7 1110,408 1108,413.6 1110,421 1114,428.5 1121,434 1128.9,437.4 1136,436 1145,434 1145,772 930.5,772 932,748 928,735 923.3,724 918,714 911.4,705 904,696 897.1,688.4 892,679 890,669.3 890.5,663 892.3,657.4 899,650 906.7,645.4 920,641.5 932.9,639.7 935,643.5 937.7,645.4 942,641 947.2,635.9 956,633 966.3,631.1 976,630 985.3,628.8 998,624.5 1009.2,619.2 1019,613.5 1028.3,607.3 1036,600.5 1042.6,593 1049,585 1054.5,576.3 1058.5,567 1061.7,557.2 1066.5,548 1071.2,538.1 1074,531 1076,523.8 1074.5,517 1071.2,511.9 1073.8,511.8 1069.3,502.9 1064.5,497 1060.4,491 1055.5,482 1051.4,473.1 1047,465 1044,458.2 1049,453.5 1054.4,449.3 1059,446 1063.4,443.4 1069.5,440 1075.3,437.4 1080,434 1084.2,431.4 1089.5,427.5 1093.1,424 1086,421 1078.2,419.5 1072,421 1066.3,424 1062,429 1057.4,432.9 1050.5,433 1044,431.4 1037,426 1030.6,419.5" fill="#9eb5c3"/><ellipse cx="935.5" cy="665" rx="13.5" ry="9.5" transform="rotate(-25 935.5 665)" fill="#8fa4b2"/><path d="M1069.5 592.5 C1072.5 595 1072.5 600 1071 606 C1069 613 1066 621 1063.5 627 C1062.5 630 1061.5 632.5 1060.5 632 C1058.5 629 1056.5 625 1055 619 C1053.5 613 1054.5 608 1058 603 C1061 598.5 1065.5 594 1069.5 592.5Z" fill="#8fa4b2"/><path d="M1060 674 C1065 672 1071 673.5 1074 676 L1078.5 675 C1079.5 681 1078.5 688 1077.5 694 C1077.5 700 1076 706 1074.5 711 C1076 715 1078 718 1081 721 C1086 724 1091 727 1095 732 C1100 737 1106 741 1112 746 C1116 752 1118 760 1116 771 L1052 771 C1051 766 1054 758 1058 750 C1060 744 1061.5 738 1062 732 C1062 726 1061 720 1059.5 714 C1057 708 1055.5 702 1055.5 696 C1055.5 688 1057 680 1060 674Z" fill="#8fa4b2" opacity="0.93"/><path d="M1081 730 L1090 738 L1086 744 L1079 738Z M1096 748 L1104 752 L1102 760 L1094 756Z" fill="#9eb5c3" opacity="0.8"/><path d="M811 742 L813 750 L811 760 L809 752Z" fill="#8fa4b2"/><polyline points="672.3,232.7 676.0,244.0 684.7,247.7 689.7,256.4 704.7,266.4 715.9,276.4 722.1,288.9 718.4,303.8 722.1,311.3 739.6,315.0 754.6,318.8 769.5,326.3 777.0,338.7 783.2,349.9 792.0,349.4 816.9,351.7 844.3,353.7 860.0,361.2" stroke="#b7c8d2" stroke-width="0.8" fill="none" stroke-dasharray="2.6 1.2" opacity="0.62" stroke-linejoin="round"/><polyline points="676.0,244.0 662.3,256.4 659.8,268.9 661.0,276.4 652.3,282.6 631.1,278.9 622.4,303.8 624.9,310.0 597.5,315.0 602.4,328.8 604.9,343.7 598.7,353.7 597.5,361.2 583.7,367.4" stroke="#b7c8d2" stroke-width="0.8" fill="none" stroke-dasharray="2.6 1.2" opacity="0.62" stroke-linejoin="round"/><polyline points="654.8,232.7 664.8,239.0 676.0,244.0" stroke="#b7c8d2" stroke-width="0.8" fill="none" stroke-dasharray="2.6 1.2" opacity="0.62" stroke-linejoin="round"/><polyline points="684.7,247.7 697.2,239.0 709.7,236.5" stroke="#b7c8d2" stroke-width="0.8" fill="none" stroke-dasharray="2.6 1.2" opacity="0.62" stroke-linejoin="round"/><polyline points="583.7,278.9 595.0,283.9 612.4,291.3 622.4,303.8" stroke="#b7c8d2" stroke-width="0.8" fill="none" stroke-dasharray="2.6 1.2" opacity="0.62" stroke-linejoin="round"/><polyline points="783.2,349.9 779.5,358.7 759.6,373.6 744.6,383.6 739.6,403.6 712.2,414.8 717.2,430.0" stroke="#a6b9c5" stroke-width="0.8" fill="none" opacity="0.6" stroke-linejoin="round"/><polyline points="739.6,403.6 759.6,413.5 784.5,416.0 789.5,403.6 804.4,408.6 819.4,393.6 826.9,381.1 806.9,381.1 792.0,349.4" stroke="#a6b9c5" stroke-width="0.8" fill="none" opacity="0.6" stroke-linejoin="round"/><polyline points="819.4,393.6 839.4,408.6 860.0,403.6" stroke="#a6b9c5" stroke-width="0.8" fill="none" opacity="0.6" stroke-linejoin="round"/><polyline points="860.0,362.4 875.0,366.2 892.4,358.7 917.4,354.9 942.3,346.2 959.8,335.0 954.8,325.0 958.5,315.0 977.2,317.5 989.7,308.8 1004.6,306.3 1014.6,293.8 1032.1,286.4 1049.5,287.6 1049.5,278.9 1039.6,267.7 1029.6,265.2 1014.6,270.1 1002.1,266.4 1004.6,253.9 1012.1,234.0" stroke="#b7c8d2" stroke-width="0.8" fill="none" stroke-dasharray="2.6 1.2" opacity="0.62" stroke-linejoin="round"/><polyline points="913.6,234.0 924.8,241.5 942.3,244.0 964.7,239.0 977.2,232.7" stroke="#b7c8d2" stroke-width="0.8" fill="none" stroke-dasharray="2.6 1.2" opacity="0.62" stroke-linejoin="round"/><polyline points="1014.6,234.0 1024.6,239.0 1034.6,235.2" stroke="#b7c8d2" stroke-width="0.8" fill="none" stroke-dasharray="2.6 1.2" opacity="0.62" stroke-linejoin="round"/><polyline points="1109.4,234.0 1104.4,251.4 1099.4,261.4 1081.9,273.9 1086.9,286.4 1072.0,301.3 1084.4,311.3 1091.9,328.8 1089.4,343.7 1072.0,353.7 1054.5,358.7 1044.5,356.2 1042.0,368.7 1034.6,373.6" stroke="#a6b9c5" stroke-width="0.8" fill="none" opacity="0.6" stroke-linejoin="round"/><polyline points="1086.9,286.4 1099.4,296.3 1111.9,303.8 1124.3,311.3 1145.0,308.8" stroke="#a6b9c5" stroke-width="0.8" fill="none" opacity="0.6" stroke-linejoin="round"/><polyline points="1091.9,328.8 1104.4,338.7 1111.9,348.7 1116.9,368.7 1129.3,363.7 1145.0,368.7" stroke="#a6b9c5" stroke-width="0.8" fill="none" opacity="0.6" stroke-linejoin="round"/><polyline points="1116.9,368.7 1109.4,383.6 1099.4,393.6" stroke="#b7c8d2" stroke-width="0.8" fill="none" stroke-dasharray="2.6 1.2" opacity="0.62" stroke-linejoin="round"/><polyline points="984.7,361.2 994.7,363.7 1004.6,356.2 1019.6,353.7 1029.6,356.2 1032.1,368.7 1039.6,373.6 1034.6,388.6 1024.6,398.6 1014.6,403.6 1009.6,398.6 999.7,401.1 994.7,388.6 984.7,383.6 982.2,371.1 984.7,361.2" stroke="#a6b9c5" stroke-width="0.8" fill="none" opacity="0.6" stroke-linejoin="round"/><polyline points="1004.6,388.6 1009.6,383.6 1017.1,388.6 1014.6,398.6 1007.1,398.6 1004.6,388.6" stroke="#a6b9c5" stroke-width="0.8" fill="none" opacity="0.6" stroke-linejoin="round"/><polyline points="860.0,403.6 870.0,401.1 875.0,408.6 889.9,403.6 899.9,413.5 914.9,408.6 924.8,418.5 942.3,401.1 959.8,393.6 977.2,386.1 984.7,383.6" stroke="#a6b9c5" stroke-width="0.8" fill="none" opacity="0.6" stroke-linejoin="round"/><polyline points="899.9,413.5 897.4,430.0" stroke="#a6b9c5" stroke-width="0.8" fill="none" opacity="0.6" stroke-linejoin="round"/><polyline points="942.3,401.1 949.8,416.0 947.3,430.0" stroke="#a6b9c5" stroke-width="0.8" fill="none" opacity="0.6" stroke-linejoin="round"/><polyline points="977.2,386.1 982.2,403.6 977.2,418.5 984.7,430.0" stroke="#a6b9c5" stroke-width="0.8" fill="none" opacity="0.6" stroke-linejoin="round"/><polyline points="1014.6,403.6 1019.6,416.0 1029.6,430.0" stroke="#a6b9c5" stroke-width="0.8" fill="none" opacity="0.6" stroke-linejoin="round"/><polyline points="589.9,444.9 599.9,457.3 629.6,454.8 666.8,444.9 699.1,442.4 704.1,454.8 709.0,477.1 719.0,489.6 738.8,494.5 758.7,497.0 778.5,506.9 790.9,502.0 795.9,479.6 803.3,477.1 815.7,489.6 828.1,494.5" stroke="#a6b9c5" stroke-width="0.8" fill="none" opacity="0.6" stroke-linejoin="round"/><polyline points="585.0,516.8 604.8,529.3 619.7,529.3 637.1,541.7 661.9,551.6 686.7,559.0 699.1,554.1 719.0,554.1 738.8,559.0 758.7,549.1 778.5,541.7 790.9,554.1 808.3,549.1 813.3,529.3 803.3,504.4 790.9,502.0" stroke="#b7c8d2" stroke-width="0.8" fill="none" stroke-dasharray="2.6 1.2" opacity="0.62" stroke-linejoin="round"/><polyline points="597.4,536.7 612.3,554.1 634.6,564.0 654.4,571.4 679.3,576.4 689.2,573.9 689.2,559.0" stroke="#b7c8d2" stroke-width="0.8" fill="none" stroke-dasharray="2.6 1.2" opacity="0.62" stroke-linejoin="round"/><polyline points="696.6,556.6 699.1,569.0 728.9,571.4 738.8,559.0" stroke="#b7c8d2" stroke-width="0.8" fill="none" stroke-dasharray="2.6 1.2" opacity="0.62" stroke-linejoin="round"/><polyline points="589.9,444.9 585.0,467.2 589.9,489.6 585.0,516.8" stroke="#b7c8d2" stroke-width="0.8" fill="none" stroke-dasharray="2.6 1.2" opacity="0.62" stroke-linejoin="round"/><polyline points="689.2,573.9 696.6,583.8 709.0,581.4 728.9,588.8 748.7,583.8 763.6,569.0 778.5,564.0 790.9,554.1" stroke="#a6b9c5" stroke-width="0.8" fill="none" opacity="0.6" stroke-linejoin="round"/><polyline points="689.2,583.8 684.2,598.7 694.1,613.6 689.2,630.0" stroke="#b7c8d2" stroke-width="0.8" fill="none" stroke-dasharray="2.6 1.2" opacity="0.62" stroke-linejoin="round"/><polyline points="709.0,581.4 709.0,593.8 733.8,596.3 748.7,583.8" stroke="#b7c8d2" stroke-width="0.8" fill="none" stroke-dasharray="2.6 1.2" opacity="0.62" stroke-linejoin="round"/><polyline points="748.7,583.8 753.7,603.7 743.8,618.6 748.7,630.0" stroke="#b7c8d2" stroke-width="0.8" fill="none" stroke-dasharray="2.6 1.2" opacity="0.62" stroke-linejoin="round"/><polyline points="808.3,549.1 803.3,569.0 798.4,588.8 803.3,608.7 798.4,630.0" stroke="#b7c8d2" stroke-width="0.8" fill="none" stroke-dasharray="2.6 1.2" opacity="0.62" stroke-linejoin="round"/><polyline points="813.3,529.3 828.1,549.1 838.1,569.0 848.0,578.9 859.9,569.0" stroke="#a6b9c5" stroke-width="0.8" fill="none" opacity="0.6" stroke-linejoin="round"/><polyline points="597.4,536.7 594.9,559.0 609.8,578.9 604.8,603.7 614.7,630.0" stroke="#a6b9c5" stroke-width="0.8" fill="none" opacity="0.6" stroke-linejoin="round"/><polyline points="634.6,564.0 639.6,583.8 629.6,603.7 644.5,618.6" stroke="#a6b9c5" stroke-width="0.8" fill="none" opacity="0.6" stroke-linejoin="round"/><polyline points="639.6,583.8 661.9,591.3 684.2,598.7" stroke="#a6b9c5" stroke-width="0.8" fill="none" opacity="0.6" stroke-linejoin="round"/><polyline points="723.1,566.8 746.9,562.0 770.7,547.7 794.6,552.5 804.1,571.5 799.4,595.4 813.7,614.4 818.4,638.3 837.5,643.1 847.0,628.8 866.1,638.3 885.2,628.8 894.7,643.1 909.0,638.3 932.9,639.7" stroke="#b7c8d2" stroke-width="0.8" fill="none" stroke-dasharray="2.6 1.2" opacity="0.62" stroke-linejoin="round"/><polyline points="727.8,624.9 732.6,604.9 723.1,590.6 699.2,588.2 675.4,590.6 670.6,609.7 689.7,626.4" stroke="#b7c8d2" stroke-width="0.8" fill="none" stroke-dasharray="2.6 1.2" opacity="0.62" stroke-linejoin="round"/><polyline points="818.4,638.3 804.1,657.4 794.6,681.2 804.1,700.3 808.9,724.1 818.4,748.0 813.7,769.4" stroke="#b7c8d2" stroke-width="0.8" fill="none" stroke-dasharray="2.6 1.2" opacity="0.62" stroke-linejoin="round"/><polyline points="847.0,628.8 842.3,652.6 866.1,671.7 885.2,690.7 909.0,709.8 913.8,738.4 923.3,748.0" stroke="#b7c8d2" stroke-width="0.8" fill="none" stroke-dasharray="2.6 1.2" opacity="0.62" stroke-linejoin="round"/><polyline points="866.1,671.7 847.0,690.7 851.8,714.6 875.7,724.1 894.7,748.0 923.3,748.0" stroke="#b7c8d2" stroke-width="0.8" fill="none" stroke-dasharray="2.6 1.2" opacity="0.62" stroke-linejoin="round"/><polyline points="885.2,500.0 890.0,528.6 913.8,547.7 909.0,576.3 928.1,595.4 923.3,624.0" stroke="#a6b9c5" stroke-width="0.8" fill="none" opacity="0.6" stroke-linejoin="round"/><polyline points="813.7,500.0 808.9,528.6 828.0,552.5 818.4,581.1 837.5,604.9 847.0,628.8" stroke="#a6b9c5" stroke-width="0.8" fill="none" opacity="0.6" stroke-linejoin="round"/><polyline points="928.1,595.4 961.5,600.1 980.6,585.8 1009.2,595.4 1028.3,607.3" stroke="#a6b9c5" stroke-width="0.8" fill="none" opacity="0.6" stroke-linejoin="round"/><polyline points="980.6,500.0 985.3,528.6 975.8,557.2 990.1,576.3 980.6,585.8" stroke="#a6b9c5" stroke-width="0.8" fill="none" opacity="0.6" stroke-linejoin="round"/><polyline points="890.0,528.6 932.9,533.4 961.5,523.8 985.3,528.6 1018.7,533.4 1037.8,519.1 1056.9,528.6" stroke="#a6b9c5" stroke-width="0.8" fill="none" opacity="0.6" stroke-linejoin="round"/><polyline points="580.0,542.9 608.6,552.5 627.7,581.1 656.3,590.6 665.8,614.4 656.3,643.1 637.2,662.1 627.7,690.7 608.6,705.1" stroke="#a6b9c5" stroke-width="0.8" fill="none" opacity="0.6" stroke-linejoin="round"/><polyline points="627.7,581.1 608.6,609.7 589.5,624.0 580.0,643.1" stroke="#a6b9c5" stroke-width="0.8" fill="none" opacity="0.6" stroke-linejoin="round"/><polyline points="580.0,681.2 599.1,690.7 613.4,681.2 627.7,690.7" stroke="#a6b9c5" stroke-width="0.8" fill="none" opacity="0.6" stroke-linejoin="round"/><text x="859.5" y="290" font-size="14.49" text-anchor="middle" fill="#7b92a1" stroke="#7b92a1" stroke-width="2.4" stroke-linejoin="round" >Mongolia</text><text x="859.5" y="290" font-size="14.49" text-anchor="middle" fill="#d3dfe7" stroke="#d3dfe7" stroke-width="0.5" stroke-linejoin="round" >Mongolia</text><text x="846" y="462" font-size="15.01" text-anchor="middle" fill="#7b92a1" stroke="#7b92a1" stroke-width="2.4" stroke-linejoin="round" >China</text><text x="846" y="462" font-size="15.01" text-anchor="middle" fill="#d3dfe7" stroke="#d3dfe7" stroke-width="0.5" stroke-linejoin="round" >China</text><text x="642" y="559" font-size="15.01" text-anchor="middle" fill="#7b92a1" stroke="#7b92a1" stroke-width="2.4" stroke-linejoin="round" >Nepal</text><text x="642" y="559" font-size="15.01" text-anchor="middle" fill="#d3dfe7" stroke="#d3dfe7" stroke-width="0.5" stroke-linejoin="round" >Nepal</text><text x="711" y="609" font-size="15.01" text-anchor="middle" fill="#7b92a1" stroke="#7b92a1" stroke-width="2.4" stroke-linejoin="round" >Bangladesh</text><text x="711" y="609" font-size="15.01" text-anchor="middle" fill="#d3dfe7" stroke="#d3dfe7" stroke-width="0.5" stroke-linejoin="round" >Bangladesh</text><text x="784" y="639" font-size="15.01" text-anchor="middle" fill="#7b92a1" stroke="#7b92a1" stroke-width="2.4" stroke-linejoin="round" >Myanmar</text><text x="784" y="639" font-size="15.01" text-anchor="middle" fill="#d3dfe7" stroke="#d3dfe7" stroke-width="0.5" stroke-linejoin="round" >Myanmar</text><text x="784" y="657.5" font-size="15.01" text-anchor="middle" fill="#7b92a1" stroke="#7b92a1" stroke-width="2.4" stroke-linejoin="round" >(Burma)</text><text x="784" y="657.5" font-size="15.01" text-anchor="middle" fill="#d3dfe7" stroke="#d3dfe7" stroke-width="0.5" stroke-linejoin="round" >(Burma)</text><text x="854" y="663" font-size="15.01" text-anchor="middle" fill="#7b92a1" stroke="#7b92a1" stroke-width="2.4" stroke-linejoin="round" >Laos</text><text x="854" y="663" font-size="15.01" text-anchor="middle" fill="#d3dfe7" stroke="#d3dfe7" stroke-width="0.5" stroke-linejoin="round" >Laos</text><text x="836" y="720" font-size="15.01" text-anchor="middle" fill="#7b92a1" stroke="#7b92a1" stroke-width="2.4" stroke-linejoin="round" >Thailand</text><text x="836" y="720" font-size="15.01" text-anchor="middle" fill="#d3dfe7" stroke="#d3dfe7" stroke-width="0.5" stroke-linejoin="round" >Thailand</text><text x="918.5" y="729.5" font-size="15.01" text-anchor="middle" fill="#7b92a1" stroke="#7b92a1" stroke-width="2.4" stroke-linejoin="round" >Vietnam</text><text x="918.5" y="729.5" font-size="15.01" text-anchor="middle" fill="#d3dfe7" stroke="#d3dfe7" stroke-width="0.5" stroke-linejoin="round" >Vietnam</text><text x="1085" y="759.5" font-size="15.01" text-anchor="middle" fill="#7b92a1" stroke="#7b92a1" stroke-width="2.4" stroke-linejoin="round" >Philippines</text><text x="1085" y="759.5" font-size="15.01" text-anchor="middle" fill="#d3dfe7" stroke="#d3dfe7" stroke-width="0.5" stroke-linejoin="round" >Philippines</text><text x="582.5" y="634.5" font-size="15.01" text-anchor="start" fill="#7b92a1" stroke="#7b92a1" stroke-width="2.4" stroke-linejoin="round" >ia</text><text x="582.5" y="634.5" font-size="15.01" text-anchor="start" fill="#d3dfe7" stroke="#d3dfe7" stroke-width="0.5" stroke-linejoin="round" >ia</text><text x="1110.5" y="295.5" font-size="11.5" font-weight="normal" text-anchor="start" fill="#d3dfe7" stroke="#7b92a1" stroke-width="1.6" paint-order="stroke" stroke-linejoin="round" >Harbin</text><text x="1112" y="326" font-size="11.5" font-weight="normal" text-anchor="middle" fill="#d3dfe7" stroke="#7b92a1" stroke-width="1.6" paint-order="stroke" stroke-linejoin="round" >Changchun</text><text x="1090" y="359" font-size="11.5" font-weight="normal" text-anchor="middle" fill="#d3dfe7" stroke="#7b92a1" stroke-width="1.6" paint-order="stroke" stroke-linejoin="round" >Shenyang</text><text x="1103.5" y="389.5" font-size="9" font-weight="bold" text-anchor="start" fill="#d3dfe7" stroke="#7b92a1" stroke-width="1.6" paint-order="stroke" stroke-linejoin="round" >North Korea</text><text x="1116.5" y="445.5" font-size="9" font-weight="bold" text-anchor="start" fill="#d3dfe7" stroke="#7b92a1" stroke-width="1.6" paint-order="stroke" stroke-linejoin="round" >South Korea</text><text x="936" y="375.5" font-size="11.5" font-weight="normal" text-anchor="middle" fill="#d3dfe7" stroke="#7b92a1" stroke-width="1.6" paint-order="stroke" stroke-linejoin="round" >Baotou</text><text x="1010.5" y="387" font-size="11.5" font-weight="normal" text-anchor="middle" fill="#d3dfe7" stroke="#7b92a1" stroke-width="1.6" paint-order="stroke" stroke-linejoin="round" >Beijing</text><text x="683" y="346.5" font-size="11.5" font-weight="normal" text-anchor="middle" fill="#d3dfe7" stroke="#7b92a1" stroke-width="1.6" paint-order="stroke" stroke-linejoin="round" >Ürümqi/</text><text x="683" y="361" font-size="11.5" font-weight="normal" text-anchor="middle" fill="#d3dfe7" stroke="#7b92a1" stroke-width="1.6" paint-order="stroke" stroke-linejoin="round" >Wulumuqi</text><text x="925.5" y="486" font-size="11.5" font-weight="normal" text-anchor="middle" fill="#d3dfe7" stroke="#7b92a1" stroke-width="1.6" paint-order="stroke" stroke-linejoin="round" >Xi&#39;an</text><text x="980" y="479.5" font-size="11.5" font-weight="normal" text-anchor="middle" fill="#d3dfe7" stroke="#7b92a1" stroke-width="1.6" paint-order="stroke" stroke-linejoin="round" >Zhengzhou</text><text x="870" y="517" font-size="11.5" font-weight="normal" text-anchor="middle" fill="#d3dfe7" stroke="#7b92a1" stroke-width="1.6" paint-order="stroke" stroke-linejoin="round" >Chengdu</text><text x="1045" y="527.5" font-size="11.5" font-weight="normal" text-anchor="start" fill="#d3dfe7" stroke="#7b92a1" stroke-width="1.6" paint-order="stroke" stroke-linejoin="round" >Shanghai</text><text x="1005" y="561" font-size="11.5" font-weight="normal" text-anchor="middle" fill="#d3dfe7" stroke="#7b92a1" stroke-width="1.6" paint-order="stroke" stroke-linejoin="round" >Nanchang</text><text x="900.5" y="569" font-size="11.5" font-weight="normal" text-anchor="middle" fill="#d3dfe7" stroke="#7b92a1" stroke-width="1.6" paint-order="stroke" stroke-linejoin="round" >Guiyang</text><text x="1070" y="589" font-size="11.5" font-weight="normal" text-anchor="middle" fill="#d3dfe7" stroke="#7b92a1" stroke-width="1.6" paint-order="stroke" stroke-linejoin="round" >Taipei</text><text x="1062.5" y="614" font-size="9.4" font-weight="bold" text-anchor="middle" fill="#d3dfe7" stroke="#7b92a1" stroke-width="1.6" paint-order="stroke" stroke-linejoin="round" >Taiwan</text><text x="918.5" y="616.5" font-size="11.5" font-weight="normal" text-anchor="middle" fill="#d3dfe7" stroke="#7b92a1" stroke-width="1.6" paint-order="stroke" stroke-linejoin="round" >Nanning</text><text x="890.5" y="638" font-size="11.5" font-weight="normal" text-anchor="middle" fill="#d3dfe7" stroke="#7b92a1" stroke-width="1.6" paint-order="stroke" stroke-linejoin="round" >Hanoi</text><text x="984.5" y="642.5" font-size="11.5" font-weight="normal" text-anchor="middle" fill="#d3dfe7" stroke="#7b92a1" stroke-width="1.6" paint-order="stroke" stroke-linejoin="round" >Hong Kong</text><text x="780" y="708.5" font-size="11.5" font-weight="normal" text-anchor="middle" fill="#d3dfe7" stroke="#7b92a1" stroke-width="1.6" paint-order="stroke" stroke-linejoin="round" >Yangon</text><text x="692" y="639" font-size="11.5" font-weight="normal" text-anchor="middle" fill="#d3dfe7" stroke="#7b92a1" stroke-width="1.6" paint-order="stroke" stroke-linejoin="round" >Kolkata</text><text x="716" y="567.5" font-size="10.5" font-weight="normal" text-anchor="middle" fill="#d3dfe7" stroke="#7b92a1" stroke-width="1.6" paint-order="stroke" stroke-linejoin="round" >Bhutan</text><text x="1063" y="714.5" font-size="11.5" font-weight="normal" text-anchor="middle" fill="#d3dfe7" stroke="#7b92a1" stroke-width="1.6" paint-order="stroke" stroke-linejoin="round" >Manila</text><text x="582" y="733" font-size="11.5" font-weight="normal" text-anchor="start" fill="#d3dfe7" stroke="#7b92a1" stroke-width="1.6" paint-order="stroke" stroke-linejoin="round" >Chennai</text><text x="764.5" y="556" font-size="9.5" font-weight="bold" text-anchor="middle" fill="#d3dfe7" stroke="#7b92a1" stroke-width="1.6" paint-order="stroke" stroke-linejoin="round" letter-spacing="1">A.P.</text><text x="762.5" y="584.5" font-size="9.5" font-weight="bold" text-anchor="middle" fill="#d3dfe7" stroke="#7b92a1" stroke-width="1.6" paint-order="stroke" stroke-linejoin="round" letter-spacing="1">NAG.</text><text x="656" y="619" font-size="9.5" font-weight="bold" text-anchor="middle" fill="#d3dfe7" stroke="#7b92a1" stroke-width="1.6" paint-order="stroke" stroke-linejoin="round" letter-spacing="1">JHA.</text><text x="619" y="642.5" font-size="9.5" font-weight="bold" text-anchor="middle" fill="#d3dfe7" stroke="#7b92a1" stroke-width="1.6" paint-order="stroke" stroke-linejoin="round" letter-spacing="1">CHH.</text><text x="648.5" y="657.5" font-size="9.5" font-weight="bold" text-anchor="middle" fill="#d3dfe7" stroke="#7b92a1" stroke-width="1.6" paint-order="stroke" stroke-linejoin="round" letter-spacing="1">ODI.</text><text x="603" y="569" font-size="9.5" font-weight="bold" text-anchor="middle" fill="#d3dfe7" stroke="#7b92a1" stroke-width="1.6" paint-order="stroke" stroke-linejoin="round" letter-spacing="1">U.P.</text><text x="582.5" y="532" font-size="9.5" font-weight="bold" text-anchor="start" fill="#d3dfe7" stroke="#7b92a1" stroke-width="1.6" paint-order="stroke" stroke-linejoin="round" letter-spacing="1">TT.</text><text x="582.5" y="683" font-size="9.5" font-weight="bold" text-anchor="start" fill="#d3dfe7" stroke="#7b92a1" stroke-width="1.6" paint-order="stroke" stroke-linejoin="round" letter-spacing="1">EL.</text><text x="582.5" y="714" font-size="9.5" font-weight="bold" text-anchor="start" fill="#d3dfe7" stroke="#7b92a1" stroke-width="1.6" paint-order="stroke" stroke-linejoin="round" letter-spacing="1">A.P.</text><text x="582.5" y="764" font-size="9.5" font-weight="bold" text-anchor="start" fill="#d3dfe7" stroke="#7b92a1" stroke-width="1.6" paint-order="stroke" stroke-linejoin="round" letter-spacing="1">N.</text><text x="678" y="719.5" font-size="14" font-style="italic" text-anchor="middle" fill="#b4cbd8" letter-spacing="2.4">Bay of</text><text x="677.5" y="742" font-size="14" font-style="italic" text-anchor="middle" fill="#b4cbd8" letter-spacing="2.4">Bengal</text><text x="0" y="0" font-size="13" font-style="italic" fill="#adc4d1" letter-spacing="1.6" transform="translate(981,772) rotate(-66)">China Sea</text><circle cx="1127" cy="302" r="2.6" fill="#cddae2" stroke="#7b92a1" stroke-width="0.9"/><circle cx="1112.2" cy="332" r="2.6" fill="#cddae2" stroke="#7b92a1" stroke-width="0.9"/><circle cx="1091.2" cy="364.4" r="2.6" fill="#cddae2" stroke="#7b92a1" stroke-width="0.9"/><circle cx="935.7" cy="381.6" r="2.6" fill="#cddae2" stroke="#7b92a1" stroke-width="0.9"/><circle cx="1010.6" cy="392.6" r="2.6" fill="#cddae2" stroke="#7b92a1" stroke-width="0.9"/><circle cx="682.5" cy="333" r="2.6" fill="#cddae2" stroke="#7b92a1" stroke-width="0.9"/><circle cx="926.2" cy="473" r="2.6" fill="#cddae2" stroke="#7b92a1" stroke-width="0.9"/><circle cx="979.6" cy="466" r="2.6" fill="#cddae2" stroke="#7b92a1" stroke-width="0.9"/><circle cx="870" cy="522" r="2.6" fill="#cddae2" stroke="#7b92a1" stroke-width="0.9"/><circle cx="900.5" cy="574.9" r="2.6" fill="#cddae2" stroke="#7b92a1" stroke-width="0.9"/><circle cx="1004.4" cy="547.2" r="2.6" fill="#cddae2" stroke="#7b92a1" stroke-width="0.9"/><circle cx="1068.8" cy="514.3" r="2.6" fill="#cddae2" stroke="#7b92a1" stroke-width="0.9"/><circle cx="692" cy="625.4" r="2.6" fill="#cddae2" stroke="#7b92a1" stroke-width="0.9"/><circle cx="891" cy="643.5" r="2.6" fill="#cddae2" stroke="#7b92a1" stroke-width="0.9"/><circle cx="918.6" cy="621.6" r="2.6" fill="#cddae2" stroke="#7b92a1" stroke-width="0.9"/><circle cx="985.3" cy="628.3" r="2.6" fill="#cddae2" stroke="#7b92a1" stroke-width="0.9"/><circle cx="1068.8" cy="594.4" r="2.6" fill="#cddae2" stroke="#7b92a1" stroke-width="0.9"/><circle cx="779.8" cy="694.6" r="2.6" fill="#cddae2" stroke="#7b92a1" stroke-width="0.9"/><circle cx="1062.6" cy="720.3" r="2.6" fill="#cddae2" stroke="#7b92a1" stroke-width="0.9"/><circle cx="600" cy="738.4" r="2.6" fill="#cddae2" stroke="#7b92a1" stroke-width="0.9"/><circle cx="900.5" cy="765" r="2.6" fill="#cddae2" stroke="#7b92a1" stroke-width="0.9"/><path d="M686 508.3 L677.94 493.63 A9.2 9.2 0 1 1 694.06 493.63 Z" fill="#92cef6"/><circle cx="686" cy="489.2" r="3.05" fill="#8ca2b1"/><path d="M1038.2 492.3 L1030.14 477.63 A9.2 9.2 0 1 1 1046.26 477.63 Z" fill="#92cef6"/><circle cx="1038.2" cy="473.2" r="3.05" fill="#8ca2b1"/><rect x="1075.6" y="430" width="53.2" height="144" rx="2" fill="#6d8595" opacity="0.55"/><rect x="1075" y="429" width="53" height="144" rx="2" fill="#eaf6fd" /><rect x="1084" y="447" width="6" height="106" fill="url(#lg)"/><text x="1122.5" y="445.5" font-size="14.7" text-anchor="end" fill="#9c9c9c">200</text><text x="1122.5" y="565" font-size="14.7" text-anchor="end" fill="#9c9c9c">100</text><rect x="825" y="490" width="75" height="20" rx="3" fill="#4d565b" opacity="0.96"/><path d="M848.5 494.2H842.7V505.6H852.8V499.5" stroke="#fff" stroke-width="1.3" fill="none"/><path d="M845.6 503L853.2 493.2" stroke="#fff" stroke-width="2" fill="none"/><text x="859.6" y="504" font-size="11.6" fill="#fff" font-family="Liberation Serif, serif" letter-spacing="1.4" stroke="#fff" stroke-width="0.25">Edit</text></g></svg>
</div></body></html>
